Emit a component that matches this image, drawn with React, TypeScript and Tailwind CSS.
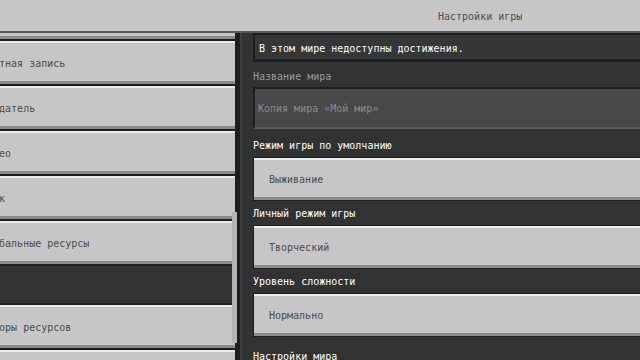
const leftItems = [
  { label: "Профиль" },
  { label: "Учётная запись" },
  { label: "Создатель" },
  { label: "Видео" },
  { label: "Звук" },
  { label: "Глобальные ресурсы" },
  { label: "Мир", selected: true },
  { label: "Наборы ресурсов" },
  { label: "Надстройки" },
];

const dropdowns = [
  { label: "Режим игры по умолчанию", value: "Выживание" },
  { label: "Личный режим игры", value: "Творческий" },
  { label: "Уровень сложности", value: "Нормально" },
];

function LightButton({ children, height }: { children: React.ReactNode; height: string }) {
  return (
    <div className={`flex items-center border-t-2 border-b-[3px] border-t-[#ececec] border-b-[#8b8b8b] bg-[#c6c6c6] ${height}`}>
      {children}
    </div>
  );
}

export default function App() {
  return (
    <div
      className="flex h-[360px] w-[640px] flex-col overflow-hidden bg-[#313233] text-[10px] leading-none"
      style={{ fontFamily: '"DejaVu Sans Mono", monospace' }}
    >
      <div className="flex h-[33px] shrink-0 items-center border-b-2 border-[#58585a] bg-[#c6c6c6] pl-[438px] text-[#4e4e4e]">
        <span className="pt-[2px]">Настройки игры</span>
      </div>

      <div className="flex min-h-0 flex-1">
        {/* left list */}
        <div className="relative w-[237px] shrink-0 overflow-hidden bg-[#1e1e1f]">
          <div className="-mt-[37px] flex w-[235px] flex-col gap-[2px]">
            {leftItems.map((item) =>
              item.selected ? (
                <div
                  key={item.label}
                  className="flex h-[37px] items-center bg-[#313233] text-white"
                >
                  <span className="-ml-[19px] whitespace-nowrap">{item.label}</span>
                </div>
              ) : (
                <LightButton key={item.label} height="h-[43px]">
                  <span className="-ml-[19px] whitespace-nowrap pt-[4px] text-[#4c4c4c]">{item.label}</span>
                </LightButton>
              )
            )}
          </div>
          <div className="absolute left-[232px] top-[179px] h-[131px] w-[5px] bg-[#b4b4b4]" />
        </div>

        <div className="w-[3px] shrink-0 bg-[#1e1e1f]" />
        <div className="w-[2px] shrink-0 bg-[#3f3f41]" />

        {/* right panel */}
        <div className="min-w-0 flex-1 pl-[11px]">
          <div className="w-[400px]">
            <div className="flex h-[29px] items-center border-2 border-b-[3px] border-[#1e1e1f] bg-[#353638] pl-[4px] text-white">
              <span className="pt-[4px]">В этом мире недоступны достижения.</span>
            </div>

            <div className="flex h-[25px] items-center text-[#9a9a9a]">
              <span className="pt-[4px]">Название мира</span>
            </div>
            <div className="flex h-[42px] items-center border-2 border-b-[#5a5a5b] border-x-[#1e1e1f] border-t-[#1e1e1f] bg-[#484849] pl-[3px] text-[#8c8c8c]">
              <span className="pt-[2px]">Копия мира «Мой мир»</span>
            </div>

            {dropdowns.map((d, i) => (
              <div key={d.label}>
                <div className={`flex items-center text-white ${i === 0 ? "h-[28px] pt-[4px]" : "h-[24px]"}`}>
                  <span className="pt-[2px]">{d.label}</span>
                </div>
                <div className="h-[44px] border border-[#1e1e1f]">
                  <LightButton height="h-full">
                    <span className="pl-[15px] pt-[2px] text-[#4c4c4c]">{d.value}</span>
                  </LightButton>
                </div>
              </div>
            ))}

            <div className="mt-[7px] flex h-[24px] items-center text-white">
              <span className="pt-[2px]">Настройки мира</span>
            </div>
          </div>
        </div>
      </div>
    </div>
  );
}
